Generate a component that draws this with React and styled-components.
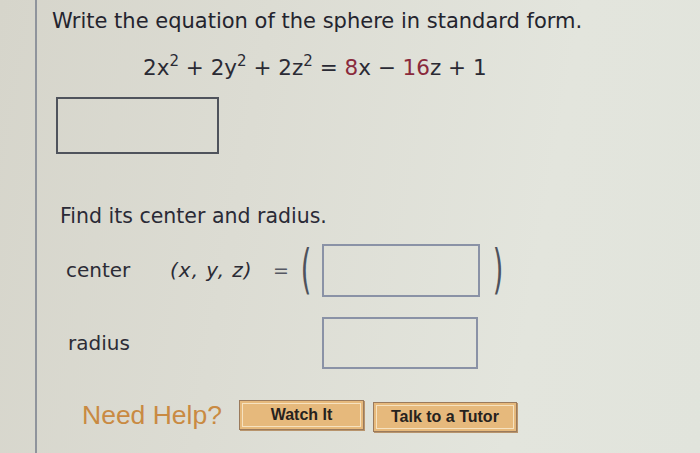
import React from "react";
import styled, { createGlobalStyle } from "styled-components";

const GlobalStyle = createGlobalStyle`
  html, body {
    margin: 0;
    padding: 0;
  }
  body {
    width: 700px;
    height: 453px;
    overflow: hidden;
    font-family: "DejaVu Sans", Verdana, sans-serif;
  }
`;

const Page = styled.div`
  width: 700px;
  height: 453px;
  box-sizing: border-box;
  padding-left: 35px;
  background: linear-gradient(100deg, #d6d5cb 0%, #dcdcd3 35%, #e3e5dd 75%, #e1e4dc 100%);
  display: flex;
`;

const Panel = styled.div`
  flex: 1;
  border-left: 2px solid #8f949c;
  padding: 8px 0 0 15px;
  display: flex;
  flex-direction: column;
  color: #2a2a36;
`;

const Title = styled.div`
  font-size: 21px;
  line-height: 26px;
  color: #24242e;
  white-space: nowrap;
`;

const Equation = styled.div`
  margin: 21px 0 0 91px;
  font-size: 21.5px;
  line-height: 26px;
  color: #2a2a34;
  white-space: nowrap;

  sup {
    font-size: 15px;
    line-height: 0;
    position: relative;
    top: -1px;
  }
`;

const Red = styled.span`
  color: #8a2a3c;
`;

const AnswerBox = styled.div`
  width: ${(p) => p.$w}px;
  height: ${(p) => p.$h}px;
  box-sizing: border-box;
  border: ${(p) => (p.$dark ? "2px solid #4f535c" : "2px solid #8a92a6")};
  background: transparent;
  flex-shrink: 0;
`;

const BigBox = styled(AnswerBox)`
  margin: 16px 0 0 4px;
`;

const Prompt = styled.div`
  margin-top: 49px;
  margin-left: 8px;
  font-size: 20.5px;
  line-height: 26px;
  white-space: nowrap;
`;

const Row = styled.div`
  display: flex;
  align-items: center;
  margin-top: ${(p) => p.$top}px;
`;

const Label = styled.div`
  width: ${(p) => p.$w}px;
  margin-left: ${(p) => p.$left}px;
  font-size: 20px;
  color: #2c2c36;
  flex-shrink: 0;
`;

const Vars = styled.div`
  width: 103px;
  font-size: 20px;
  font-style: italic;
  letter-spacing: 1px;
  color: #2c2c36;
  white-space: nowrap;
  flex-shrink: 0;
`;

const Eq = styled.div`
  width: 17px;
  font-size: 19px;
  color: #555863;
  flex-shrink: 0;
`;

const Paren = styled.div`
  font-size: 54px;
  font-weight: normal;
  line-height: 54px;
  color: #4e525c;
  transform: scaleX(0.5);
  width: ${(p) => p.$w}px;
  text-align: center;
  flex-shrink: 0;
`;

const Help = styled.div`
  margin: 29px 0 0 30px;
  display: flex;
  align-items: center;
`;

const NeedHelp = styled.div`
  font-family: "Liberation Sans", Arial, sans-serif;
  font-size: 26.5px;
  color: #c98a42;
  margin-right: 17px;
`;

const Button = styled.div`
  box-sizing: border-box;
  width: ${(p) => p.$w}px;
  height: 30px;
  margin-top: ${(p) => p.$drop}px;
  margin-right: 9px;
  background: #e6b97c;
  border: 1px solid #9a7a5c;
  box-shadow: inset 0 0 0 2px #e6b97c, inset 0 0 0 3px #f6e2c0, 1px 1px 0 #b8946c;
  display: flex;
  align-items: center;
  justify-content: center;
  font-family: "Liberation Sans", Arial, sans-serif;
  font-weight: bold;
  font-size: 16px;
  color: #26221e;
`;

export default function App() {
  return (
    <>
      <GlobalStyle />
      <Page>
        <Panel>
          <Title>Write the equation of the sphere in standard form.</Title>
          <Equation>
            2x<sup>2</sup> + 2y<sup>2</sup> + 2z<sup>2</sup> = <Red>8</Red>x − <Red>16</Red>z + 1
          </Equation>
          <BigBox $w={163} $h={57} $dark />
          <Prompt>Find its center and radius.</Prompt>
          <Row $top={14}>
            <Label $w={104} $left={14}>center</Label>
            <Vars>(x, y, z)</Vars>
            <Eq>=</Eq>
            <Paren $w={32}>(</Paren>
            <AnswerBox $w={158} $h={53} />
            <Paren $w={36}>)</Paren>
          </Row>
          <Row $top={20}>
            <Label $w={254} $left={16}>radius</Label>
            <AnswerBox $w={156} $h={52} />
          </Row>
          <Help>
            <NeedHelp>Need Help?</NeedHelp>
            <Button $w={125} $drop={0}>Watch It</Button>
            <Button $w={144} $drop={4}>Talk to a Tutor</Button>
          </Help>
        </Panel>
      </Page>
    </>
  );
}
